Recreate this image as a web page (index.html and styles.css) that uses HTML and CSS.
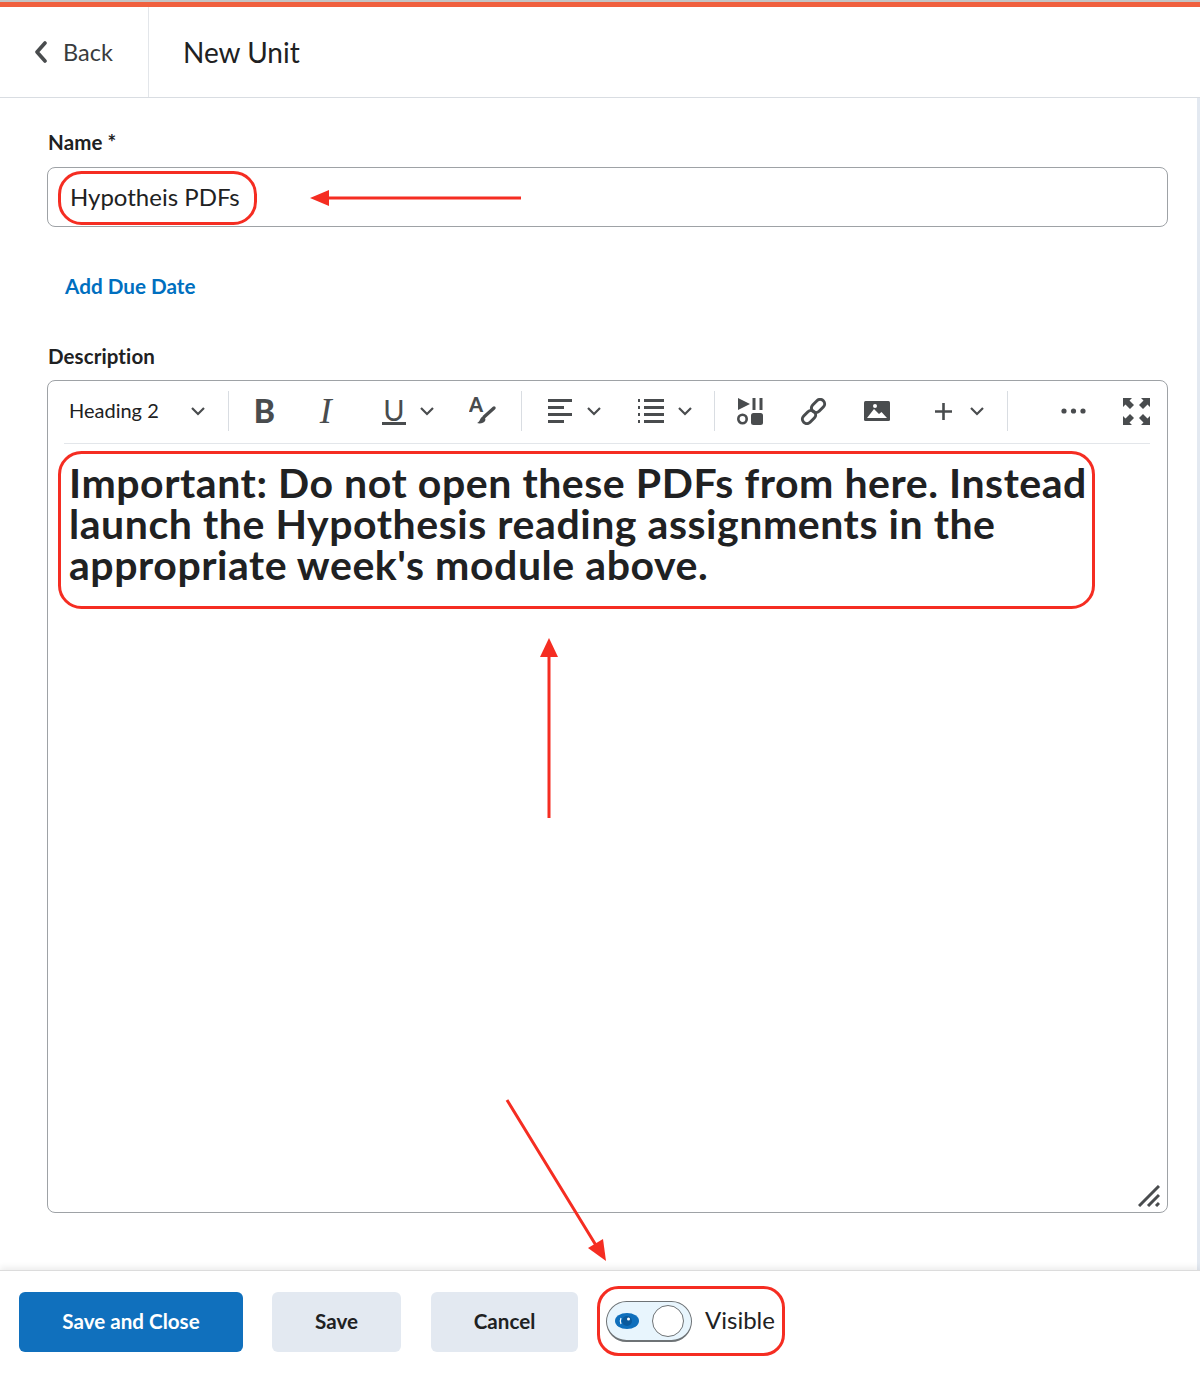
FILE: index.html
```html
<!DOCTYPE html>
<html>
<head>
  <title>New Unit</title>
  <link rel="stylesheet" href="styles.css">
</head>
<body>
<div class="page">
  <header class="topbar">
    <a class="back">
      <svg class="back-icon" width="14" height="22" viewBox="0 0 14 22"><path d="M11 2 L3 11 L11 20" fill="none" stroke="#494c4e" stroke-width="3.6" stroke-linejoin="round" stroke-linecap="round"/></svg>
      <span>Back</span>
    </a>
    <div class="page-title">New Unit</div>
  </header>

  <main class="content">
    <label class="field-label name-label">Name *</label>
    <div class="text-input">Hypotheis PDFs</div>
    <a class="add-date">Add Due Date</a>
    <label class="field-label desc-label">Description</label>

    <div class="editor">
      <div class="toolbar">
        <div class="tool-group format-group">
          <span class="format-name">Heading 2</span>
          <svg class="chev format-chev" width="16" height="10" viewBox="0 0 16 10"><path d="M2 2 L8 8 L14 2"/></svg>
        </div>
        <div class="tool-group group-one">
          <span class="glyph glyph-bold">B</span>
          <span class="glyph glyph-italic ml-47">I</span>
          <span class="tool ml-47">
            <span class="glyph glyph-under">U</span>
            <svg class="chev" width="16" height="10" viewBox="0 0 16 10"><path d="M2 2 L8 8 L14 2"/></svg>
          </span>
          <svg class="icon ml-34" width="28" height="44" viewBox="0 -8 28 44">
            <text class="icon-letter" x="0" y="15">A</text>
            <path d="M25 11 L15 20" stroke="#494c4e" stroke-width="3.4" stroke-linecap="round"/>
            <path d="M13 20 C16 20 17 22 16 24 C15 26 11 27 8 26 C11 25 11 21 13 20 Z" fill="#494c4e"/>
          </svg>
        </div>
        <div class="tool-group group-two">
          <span class="tool">
            <svg class="icon" width="26" height="26" viewBox="0 0 26 26"><path class="thick" d="M1 2.5 H25 M1 9.5 H17 M1 16.5 H25 M1 23.5 H17"/></svg>
            <svg class="chev" width="16" height="10" viewBox="0 0 16 10"><path d="M2 2 L8 8 L14 2"/></svg>
          </span>
          <span class="tool ml-35">
            <svg class="icon" width="27" height="26" viewBox="0 0 27 26"><path class="thick" d="M7 2.5 H27 M7 9.5 H27 M7 16.5 H27 M7 23.5 H27"/><path class="dots-col" d="M1 2.5 H3 M1 9.5 H3 M1 16.5 H3 M1 23.5 H3"/></svg>
            <svg class="chev" width="16" height="10" viewBox="0 0 16 10"><path d="M2 2 L8 8 L14 2"/></svg>
          </span>
        </div>
        <div class="tool-group group-three">
          <svg class="icon" width="26" height="28" viewBox="0 0 26 28">
            <path d="M1 1 L13 7 L1 13 Z" fill="#494c4e"/>
            <path class="thick" d="M17 1 V13 M24 1 V13"/>
            <circle cx="5.5" cy="22" r="4.2" fill="none" stroke="#494c4e" stroke-width="2.6"/>
            <rect x="14" y="16" width="12" height="12" rx="2.5" fill="#494c4e"/>
          </svg>
          <svg class="icon ml-37" width="27" height="27" viewBox="0 0 27 27">
            <g fill="none" stroke="#494c4e" stroke-width="3">
              <rect x="10.5" y="3.500" width="15" height="9" rx="4.5" transform="rotate(-45 18 8)"/>
              <rect x="1.500" y="14.500" width="15" height="9" rx="4.5" transform="rotate(-45 9 19)"/>
            </g>
          </svg>
          <svg class="icon ml-37" width="26" height="20" viewBox="0 0 26 20">
            <rect width="26" height="20" rx="1.5" fill="#494c4e"/>
            <path d="M3 17 L10 8 L15 13 L17.5 11 L23 17 Z" fill="#fff"/>
            <circle cx="11" cy="5" r="2" fill="#fff"/>
          </svg>
          <span class="tool ml-45">
            <svg class="icon" width="17" height="17" viewBox="0 0 17 17"><path class="thin" d="M8.5 0 V17 M0 8.5 H17"/></svg>
            <svg class="chev plus-chev" width="16" height="10" viewBox="0 0 16 10"><path d="M2 2 L8 8 L14 2"/></svg>
          </span>
        </div>
        <div class="tool-group group-four">
          <svg class="icon" width="25" height="6" viewBox="0 0 25 6"><circle cx="3" cy="3" r="2.6"/><circle cx="12.5" cy="3" r="2.6"/><circle cx="22" cy="3" r="2.6"/></svg>
          <svg class="icon ml-37" width="27" height="27" viewBox="0 0 27 27">
            <path d="M0 0 H9 L6.5 2.5 L11 7 L7 11 L2.5 6.5 L0 9 Z M27 0 V9 L24.500 6.5 L20 11 L16 7 L20.500 2.500 L18 0 Z M0 27 V18 L2.5 20.500 L7 16 L11 20 L6.500 24.500 L9 27 Z M27 27 H18 L20.500 24.500 L16 20 L20 16 L24.500 20.500 L27 18 Z" fill="#494c4e"/>
          </svg>
        </div>
      </div>
      <div class="editor-body">
        <h2 class="editor-heading">Important: Do not open these PDFs from here. Instead launch the Hypothesis reading assignments in the appropriate week's module above.</h2>
      </div>
      <svg class="resize-handle" width="22" height="22" viewBox="0 0 22 22"><path d="M1 21 L21 1 M10 21 L21 10 M18 21 L21 18" fill="none" stroke="#494c4e" stroke-width="3"/></svg>
    </div>
  </main>

  <footer class="actions">
    <button class="btn btn-primary btn-save-close">Save and Close</button>
    <button class="btn btn-save">Save</button>
    <button class="btn btn-cancel">Cancel</button>
    <div class="visibility">
      <div class="toggle">
        <svg class="eye" width="24" height="16" viewBox="0 0 24 16"><ellipse cx="12" cy="8" rx="12" ry="8" fill="#0f6fbc"/><circle cx="12" cy="8" r="5" fill="#0b5a9c"/><circle cx="13.500" cy="6" r="1.5" fill="#fff"/><path d="M6 5 A7 7 0 0 0 6 11" fill="none" stroke="#fff" stroke-width="1.2"/></svg>
        <span class="knob"></span>
      </div>
      <span class="visible-text">Visible</span>
    </div>
  </footer>

  <!-- red callouts drawn on top of the screenshot -->
  <svg class="annotations" width="1200" height="1374" viewBox="0 0 1200 1374">
    <g fill="none" stroke="#f52d22" stroke-width="3">
      <rect x="59.500" y="172.500" width="196" height="51" rx="22"/>
      <rect x="59.500" y="452.500" width="1034" height="155" rx="22"/>
      <rect x="598.500" y="1287.500" width="185" height="67" rx="20"/>
      <path d="M521 198 H325 M549 818 V652 M507 1100 L597 1247"/>
    </g>
    <g fill="#f52d22">
      <path d="M310 198 L329 190 V206 Z"/>
      <path d="M549 638 L558 657 H540 Z"/>
      <path d="M606 1261 L588 1248 L603 1239 Z"/>
    </g>
  </svg>
</div>
</body>
</html>
```

FILE: styles.css
```css
/* Reset default margin for the body */
body {
  margin: 0;
  background-color: #fff;
  color: #202122;
  font-family: "Lato", "Open Sans", sans-serif;
}

.page {
  position: relative;
  width: 1200px;
  height: 1374px;
  display: flex;
  flex-direction: column;
  overflow: hidden;
  box-sizing: border-box;
  border-top: 2px solid #c4c4c4;
}

/* Orange strip and title bar */
.topbar {
  height: 90px;
  flex: none;
  display: flex;
  border-top: 5px solid #f0603e;
  border-bottom: 1px solid #d9dde2;
}

.back {
  width: 149px;
  display: flex;
  align-items: center;
  gap: 15px;
  padding-left: 34px;
  box-sizing: border-box;
  border-right: 1px solid #e3e6ea;
  font-size: 23.5px;
  color: #393c3e;
}

.back-icon {
  flex: none;
}

.page-title {
  display: flex;
  align-items: center;
  padding-left: 34px;
  font-size: 28px;
}

/* Form area */
.content {
  flex: 1;
  padding: 31px 29px 0 47px;
  border-right: 3px solid #e3e9f1;
  box-sizing: border-box;
}

.field-label {
  display: block;
  margin-left: 1px;
  font-size: 20.5px;
  font-weight: 700;
  letter-spacing: 0.1px;
  line-height: 26px;
}

.text-input {
  height: 58px;
  margin-top: 12px;
  padding-left: 22px;
  border: 1px solid #9ea2a6;
  border-radius: 8px;
  font-size: 24px;
  line-height: 58px;
}

.add-date {
  display: block;
  margin: 45px 0 0 18px;
  color: #006fbf;
  font-size: 20.7px;
  font-weight: 700;
  line-height: 28px;
}

.desc-label {
  margin-top: 43px;
}

/* Editor */
.editor {
  position: relative;
  height: 831px;
  margin-top: 11px;
  border: 1px solid #9ea2a6;
  border-radius: 8px;
}

.toolbar {
  height: 62px;
  display: flex;
  align-items: center;
  margin-right: 17px;
  margin-left: 16px;
  border-bottom: 1px solid #e3e6ea;
}

.tool-group {
  height: 40px;
  display: flex;
  align-items: center;
  margin-bottom: 2px;
  box-sizing: border-box;
  border-right: 1px solid #d9dde2;
}

.format-group {
  width: 165px;
  padding-left: 5px;
  font-size: 20px;
}

.format-name {
  margin-bottom: 3px;
}

.format-chev {
  margin-left: auto;
  margin-right: 22px;
}

.group-one {
  width: 293px;
  padding-left: 25px;
}

.group-two {
  width: 194px;
  padding-left: 25px;
}

.group-three {
  width: 293px;
  padding-left: 22px;
}

.group-four {
  padding-left: 53px;
  border-right: none;
}

.tool {
  display: flex;
  align-items: center;
  gap: 13px;
}

.ml-34 { margin-left: 34px; }
.ml-35 { margin-left: 35px; }
.ml-37 { margin-left: 37px; }
.ml-45 { margin-left: 45px; }
.ml-47 { margin-left: 47px; }

.plus-chev {
  margin-left: 4px;
}

.glyph {
  color: #494c4e;
  line-height: 30px;
}

.glyph-bold {
  width: 19px;
  font-size: 32px;
  font-weight: 900;
}

.glyph-italic {
  width: 15px;
  font-family: "Liberation Serif", serif;
  font-size: 36px;
  font-style: italic;
}

.glyph-under {
  width: 24px;
  text-align: center;
  font-size: 29px;
  line-height: 24px;
  border-bottom: 3px solid #494c4e;
}

.icon {
  flex: none;
  fill: #494c4e;
}

.icon-letter {
  font-size: 20px;
  font-weight: 900;
  fill: #494c4e;
}

.thick {
  fill: none;
  stroke: #494c4e;
  stroke-width: 3;
}

.thin {
  fill: none;
  stroke: #494c4e;
  stroke-width: 2.6;
}

.dots-col {
  fill: none;
  stroke: #494c4e;
  stroke-width: 3;
}

.chev {
  flex: none;
  fill: none;
  stroke: #494c4e;
  stroke-width: 2.2;
}

.editor-body {
  padding: 18px 0 0 21px;
}

.editor-heading {
  margin: 0;
  width: 1040px;
  font-size: 41px;
  font-weight: 700;
  letter-spacing: 0.55px;
  line-height: 41px;
}

.resize-handle {
  position: absolute;
  right: 7px;
  bottom: 5px;
}

/* Bottom action bar */
.actions {
  height: 104px;
  flex: none;
  display: flex;
  align-items: center;
  padding: 0 0 2px 19px;
  box-sizing: border-box;
  border-top: 1px solid #dcdcdc;
  box-shadow: 0 -3px 6px rgba(0, 0, 0, 0.07);
  background-color: #fff;
}

.btn {
  height: 60px;
  padding: 0 0 2px;
  border: none;
  border-radius: 6px;
  background-color: #e3e9f1;
  color: #202122;
  font-family: inherit;
  font-size: 20.6px;
  font-weight: 700;
}

.btn-primary {
  background-color: #1070bd;
  color: #fff;
}

.btn-save-close {
  width: 224px;
}

.btn-save {
  width: 129px;
  margin-left: 29px;
}

.btn-cancel {
  width: 147px;
  margin-left: 30px;
}

.visibility {
  display: flex;
  align-items: center;
  margin-left: 28px;
}

.toggle {
  width: 86px;
  height: 41px;
  display: flex;
  align-items: center;
  box-sizing: border-box;
  padding-left: 8px;
  border: 1px solid #6e7376;
  border-bottom-width: 2px;
  border-radius: 21px;
  background-color: #e8f5fd;
}

.knob {
  width: 32px;
  height: 32px;
  margin-left: 13px;
  box-sizing: border-box;
  border: 1px solid #6e7376;
  border-radius: 50%;
  background-color: #fff;
}

.visible-text {
  margin: 0 0 5px 13px;
  font-size: 24px;
}

.annotations {
  position: absolute;
  top: -2px;
  left: 0;
  pointer-events: none;
}
```
